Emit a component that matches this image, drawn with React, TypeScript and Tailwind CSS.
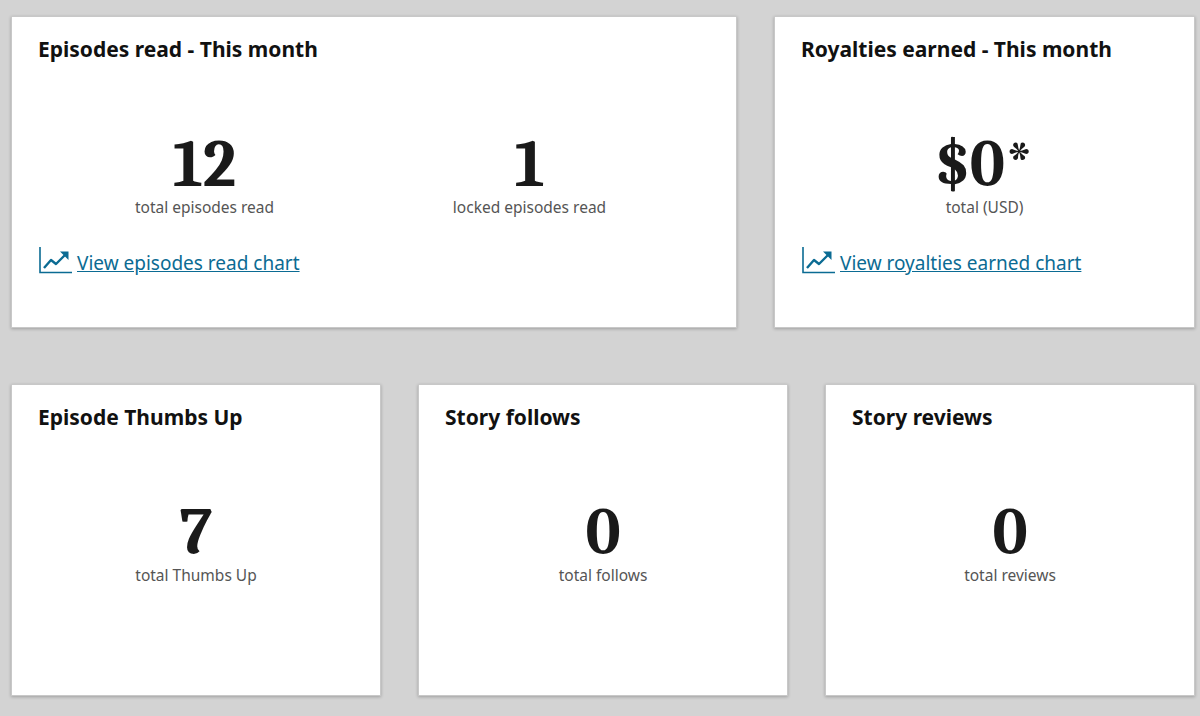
import React from "react";

const num = "font-serif font-bold text-[66px] leading-[50px] text-[#1a1a1a]";
const label = "text-[15.5px] text-[#555] mt-[6px]";
const title = "text-[21px] font-bold text-[#111] leading-none";

function ChartIcon() {
  return (
    <svg width="34" height="27" viewBox="0 0 34 27" fill="none" stroke="#0b6b93" strokeWidth="2.4">
      <path d="M2 0V25.5H34" strokeWidth="1.6" />
      <path d="M6 21L13 13L18 17L27 8" strokeLinejoin="round" />
      <path d="M22 4.5L30.5 4.5L30.5 13Z" fill="#0b6b93" stroke="none" />
    </svg>
  );
}

function Link({ text }: { text: string }) {
  return (
    <div className="flex items-end gap-[5px]">
      <ChartIcon />
      <span className="text-[19px] text-[#0b6b93] underline leading-none mb-[1px]">{text}</span>
    </div>
  );
}

function Stat({ n, l }: { n: string; l: string }) {
  return (
    <div className="flex flex-col items-center">
      <div className={num}>{n}</div>
      <div className={label}>{l}</div>
    </div>
  );
}

const card = "bg-white border border-[#c8c8c8] shadow-[0_1px_3px_rgba(0,0,0,0.25)] h-[312px] px-[26px] pt-[22px]";

function Small({ t, n, l }: { t: string; n: string; l: string }) {
  return (
    <div className={card + " w-[370px]"}>
      <div className={title}>{t}</div>
      <div className="mt-[80px]">
        <Stat n={n} l={l} />
      </div>
    </div>
  );
}

export default function App() {
  return (
    <div className="w-[1200px] h-[716px] bg-[#d3d3d3] pl-[11px] pt-[16px] font-['Open_Sans',sans-serif] overflow-hidden">
      <div className="flex gap-[37px]">
        <div className={card + " w-[726px]"}>
          <div className={title}>Episodes read - This month</div>
          <div className="grid grid-cols-2 mt-[80px] pr-[18px] pl-[4px]">
            <Stat n="12" l="total episodes read" />
            <Stat n="1" l="locked episodes read" />
          </div>
          <div className="mt-[28px]"><Link text="View episodes read chart" /></div>
        </div>
        <div className={card + " w-[421px]"}>
          <div className={title}>Royalties earned - This month</div>
          <div className="mt-[80px]">
            <Stat n="$0*" l="total (USD)" />
          </div>
          <div className="mt-[28px]"><Link text="View royalties earned chart" /></div>
        </div>
      </div>
      <div className="flex gap-[37px] mt-[56px]">
        <Small t="Episode Thumbs Up" n="7" l="total Thumbs Up" />
        <Small t="Story follows" n="0" l="total follows" />
        <Small t="Story reviews" n="0" l="total reviews" />
      </div>
    </div>
  );
}
